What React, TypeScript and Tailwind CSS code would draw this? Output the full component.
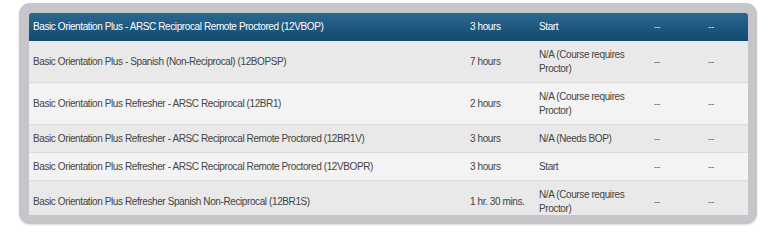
const rows = [
  { name: "Basic Orientation Plus - Spanish (Non-Reciprocal) (12BOPSP)", time: "7 hours", status: "N/A (Course requires Proctor)" },
  { name: "Basic Orientation Plus Refresher - ARSC Reciprocal (12BR1)", time: "2 hours", status: "N/A (Course requires Proctor)" },
  { name: "Basic Orientation Plus Refresher - ARSC Reciprocal Remote Proctored (12BR1V)", time: "3 hours", status: "N/A (Needs BOP)" },
  { name: "Basic Orientation Plus Refresher - ARSC Reciprocal Remote Proctored (12VBOPR)", time: "3 hours", status: "Start" },
  { name: "Basic Orientation Plus Refresher Spanish Non-Reciprocal (12BR1S)", time: "1 hr. 30 mins.", status: "N/A (Course requires Proctor)" },
];

const head = "flex h-[28px] items-center bg-gradient-to-b from-[#2b6890] to-[#124a70]";

export default function App() {
  return (
    <div className="h-[246px] w-[774px] bg-white pl-[19px] pt-[3px] font-['Liberation_Sans',Arial,sans-serif] text-[10px] leading-[14px] tracking-[-0.4px]">
      <div className="w-[738px] rounded-[11px] bg-[#c6c5ca] pb-[9px] pl-[10px] pr-[9px] pt-[10px] shadow-[0_1px_2px_rgba(0,0,0,0.15)]">
        <div className="h-[202px] overflow-hidden rounded-t-[3px]">
          <div className="grid grid-cols-[441px_69px_115px_54px_40px]">
            <div className="contents text-white">
              <div className={`${head} pl-[4px]`}>
                Basic Orientation Plus - ARSC Reciprocal Remote Proctored (12VBOP)
              </div>
              <div className={head}>3 hours</div>
              <div className={head}>Start</div>
              <div className={`${head} text-[#c8d4de]`}>--</div>
              <div className={`${head} text-[#c8d4de]`}>--</div>
            </div>
            {rows.map((r, i) => {
              const bg = i % 2 === 0 ? "bg-[#e9e9e9]" : "bg-[#f3f3f3]";
              const cell = `flex min-h-[28px] items-center border-b border-[#dcdcdc] pt-[7px] pb-[6px] ${bg}`;
              return (
                <div key={i} className="contents text-[#444]">
                  <div className={`${cell} pl-[4px]`}>{r.name}</div>
                  <div className={cell}>{r.time}</div>
                  <div className={`${cell} pr-[12px]`}>{r.status}</div>
                  <div className={`${cell} text-[#777]`}>--</div>
                  <div className={`${cell} text-[#777]`}>--</div>
                </div>
              );
            })}
          </div>
        </div>
      </div>
    </div>
  );
}
